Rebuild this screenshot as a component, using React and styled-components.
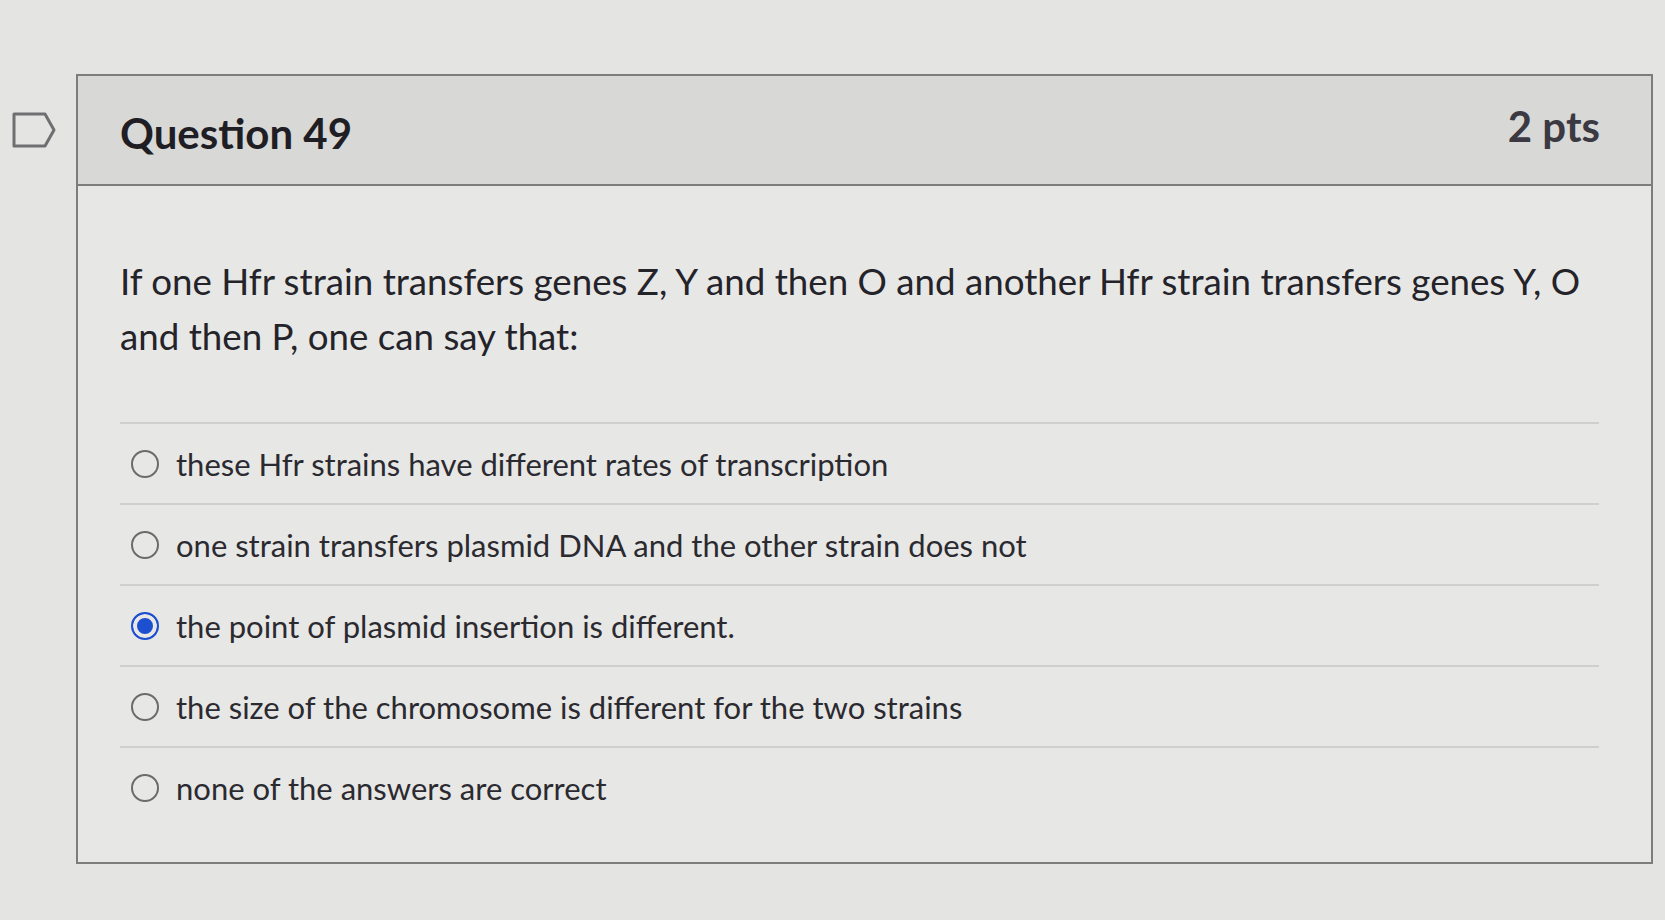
import React from "react";
import styled, { createGlobalStyle } from "styled-components";

const GlobalStyle = createGlobalStyle`
  html, body {
    margin: 0;
    padding: 0;
    background: #e4e4e2;
    font-family: Lato, "Open Sans", "Liberation Sans", sans-serif;
    color: #2b2a30;
  }
`;

const Page = styled.div`
  display: flex;
  align-items: flex-start;
  padding: 74px 12px 0 12px;
  width: 1665px;
  height: 920px;
  box-sizing: border-box;
`;

const FlagColumn = styled.div`
  width: 64px;
  flex: none;
  padding-top: 38px;
`;

const Card = styled.div`
  flex: 1;
  border: 2px solid #7d7d7d;
  background: #e7e7e5;
  height: 790px;
  box-sizing: border-box;
`;

const Header = styled.div`
  display: flex;
  justify-content: space-between;
  align-items: center;
  height: 108px;
  padding: 0 51px 0 42px;
  background: #d8d8d6;
  border-bottom: 2px solid #7d7d7d;
`;

const Title = styled.h2`
  margin: 0;
  font-size: 42px;
  font-weight: 700;
  color: #1f1e24;
  padding-top: 6px;
`;

const Points = styled.span`
  font-size: 42px;
  font-weight: 700;
  color: #3b3a42;
  padding-bottom: 8px;
`;

const Body = styled.div`
  padding: 68px 52px 0 42px;
`;

const Prompt = styled.p`
  margin: 0;
  font-size: 36.7px;
  line-height: 55px;
  color: #24232a;
`;

const Answers = styled.div`
  margin-top: 58px;
  border-top: 2px solid #cfcfcd;
`;

const Answer = styled.label`
  display: flex;
  align-items: center;
  gap: 17px;
  height: 79px;
  padding-left: 11px;
  border-bottom: ${(p) => (p.$last ? "none" : "2px solid #cfcfcd")};
  font-size: 31px;
  color: #2b2a30;
`;

const Radio = styled.span`
  width: 24px;
  height: 24px;
  flex: none;
  border-radius: 50%;
  border: 2px solid ${(p) => (p.$checked ? "#1d4fd1" : "#6b6b6b")};
  background: ${(p) => (p.$checked ? "#1d4fd1" : "transparent")};
  box-shadow: ${(p) => (p.$checked ? "inset 0 0 0 4px #e7e7e5" : "none")};
`;

const answers = [
  "these Hfr strains have different rates of transcription",
  "one strain transfers plasmid DNA and the other strain does not",
  "the point of plasmid insertion is different.",
  "the size of the chromosome is different for the two strains",
  "none of the answers are correct",
];

export default function App() {
  return (
    <>
      <GlobalStyle />
      <Page>
        <FlagColumn>
          <svg width="44" height="36" viewBox="0 0 44 36">
            <path
              d="M2 2 H33 L42 18 L33 34 H2 Z"
              fill="none"
              stroke="#6f6f73"
              strokeWidth="3"
              strokeLinejoin="round"
            />
          </svg>
        </FlagColumn>
        <Card>
          <Header>
            <Title>Question 49</Title>
            <Points>2 pts</Points>
          </Header>
          <Body>
            <Prompt>
              If one Hfr strain transfers genes Z, Y and then O and another Hfr
              strain transfers genes Y, O and then P, one can say that:
            </Prompt>
            <Answers>
              {answers.map((a, i) => (
                <Answer key={a} $last={i === answers.length - 1}>
                  <Radio $checked={i === 2} />
                  {a}
                </Answer>
              ))}
            </Answers>
          </Body>
        </Card>
      </Page>
    </>
  );
}
